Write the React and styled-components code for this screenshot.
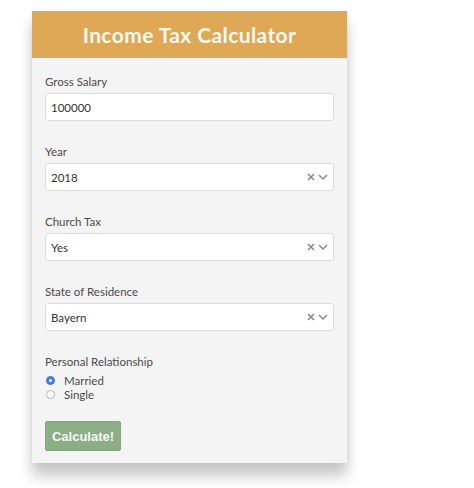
import React from 'react'
import styled, { createGlobalStyle } from 'styled-components'

const Global = createGlobalStyle`
  body {
    margin: 0;
    background: #ffffff;
    font-family: Lato, "Open Sans", sans-serif;
  }
`

const Page = styled.div`
  padding: 11px 0 0 32px;
  height: 488px;
  box-sizing: border-box;
`

const Card = styled.div`
  width: 315px;
  background: #f5f4f5;
  box-shadow: 0 13px 13px rgba(0, 0, 0, 0.22), 0 0 6px rgba(0, 0, 0, 0.06);
`

const Header = styled.h1`
  margin: 0;
  height: 47px;
  background: #dea856;
  color: #fffaf0;
  font-family: Lato, sans-serif;
  font-weight: 700;
  font-size: 21px;
  letter-spacing: 0.4px;
  display: flex;
  align-items: center;
  justify-content: center;
`

const Body = styled.div`
  padding: 17px 13px 12px;
  display: flex;
  flex-direction: column;
`

const Field = styled.div`
  display: flex;
  flex-direction: column;
  margin-bottom: 24px;
`

const Label = styled.label`
  font-size: 11.5px;
  line-height: 14px;
  color: #4a4a4a;
  margin-bottom: 4px;
`

const Input = styled.div`
  height: 28px;
  box-sizing: border-box;
  background: #fff;
  border: 1px solid #dcdcdc;
  border-radius: 3px;
  padding: 0 5px;
  display: flex;
  align-items: center;
  font-size: 11.5px;
  color: #333;
`

const Value = styled.span`
  flex: 1;
`

const Controls = styled.span`
  display: flex;
  align-items: center;
  gap: 3px;
  color: #8a8a8a;
`

const Radios = styled.div`
  display: flex;
  flex-direction: column;
  margin-bottom: 20px;
`

const RadioRow = styled.div`
  display: flex;
  align-items: center;
  height: 14px;
  font-size: 11.5px;
  color: #4a4a4a;
`

const Dot = styled.span`
  width: 9px;
  height: 9px;
  border-radius: 50%;
  box-sizing: border-box;
  margin: 0 9px 0 1px;
  background: ${p => (p.$on ? '#3f7de0' : '#fff')};
  border: 1px solid ${p => (p.$on ? '#3f7de0' : '#b5b5b5')};
  display: flex;
  align-items: center;
  justify-content: center;
  &::after {
    content: '';
    width: 3px;
    height: 3px;
    border-radius: 50%;
    background: ${p => (p.$on ? '#fff' : 'transparent')};
  }
`

const Button = styled.button`
  align-self: flex-start;
  width: 76px;
  height: 30px;
  background: #8cae86;
  border: 1px solid #84a47e;
  border-radius: 2px;
  color: #f6f8f4;
  font-family: "Liberation Sans", Arial, sans-serif;
  font-weight: 700;
  font-size: 13px;
  padding: 0;
`

function SelectIcons() {
  return (
    <Controls>
      <svg width="8" height="8" viewBox="0 0 8 8">
        <path d="M1 1 L7 7 M7 1 L1 7" stroke="#8a8a8a" strokeWidth="1.6" />
      </svg>
      <svg width="10" height="8" viewBox="0 0 10 8">
        <path d="M1 2 L5 6 L9 2" stroke="#8a8a8a" strokeWidth="1.5" fill="none" />
      </svg>
    </Controls>
  )
}

const selects = [
  { label: 'Year', value: '2018' },
  { label: 'Church Tax', value: 'Yes' },
  { label: 'State of Residence', value: 'Bayern' },
]

export default function App() {
  return (
    <Page>
      <Global />
      <Card>
        <Header>Income Tax Calculator</Header>
        <Body>
          <Field>
            <Label>Gross Salary</Label>
            <Input><Value>100000</Value></Input>
          </Field>
          {selects.map(s => (
            <Field key={s.label}>
              <Label>{s.label}</Label>
              <Input>
                <Value>{s.value}</Value>
                <SelectIcons />
              </Input>
            </Field>
          ))}
          <Label>Personal Relationship</Label>
          <Radios>
            <RadioRow><Dot $on />Married</RadioRow>
            <RadioRow><Dot />Single</RadioRow>
          </Radios>
          <Button>Calculate!</Button>
        </Body>
      </Card>
    </Page>
  )
}
